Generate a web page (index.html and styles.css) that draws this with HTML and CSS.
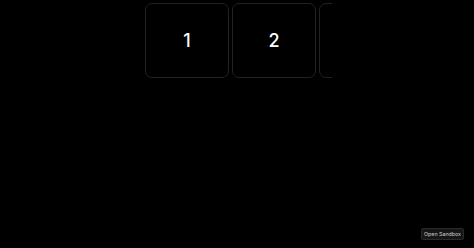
FILE: index.html
```html
<!DOCTYPE html>
<html>
<head>
<meta charset="utf-8">
<link rel="stylesheet" href="styles.css">
</head>
<body>
<div class="carousel">
  <div class="viewport">
    <div class="track">
      <div class="slide"><span>1</span></div>
      <div class="slide"><span>2</span></div>
      <div class="slide"><span>3</span></div>
      <div class="slide"><span>4</span></div>
    </div>
  </div>
</div>
<button class="sandbox">Open Sandbox</button>
</body>
</html>
```
FILE: styles.css
```css
html, body {
  margin: 0;
  padding: 0;
  background: #000;
  height: 100%;
  font-family: "Inter", "Liberation Sans", sans-serif;
}
.carousel {
  padding: 3px 0 0 145px;
}
.viewport {
  width: 187px;
  overflow: hidden;
}
.track {
  display: flex;
  gap: 3px;
}
.slide {
  flex: 0 0 84px;
  height: 75px;
  box-sizing: border-box;
  border: 1px solid #222;
  border-radius: 7px;
  display: flex;
  align-items: center;
  justify-content: center;
  color: #fff;
  font-size: 18px;
  font-weight: 500;
}
.sandbox {
  position: fixed;
  right: 10px;
  bottom: 8px;
  height: 12px;
  padding: 0 2px;
  background: #161616;
  border: 1px solid #2a2a2a;
  border-radius: 2px;
  color: #d0d0d0;
  font-family: "Inter", "Liberation Sans", sans-serif;
  font-size: 5.3px;
  line-height: 10px;
}
```
